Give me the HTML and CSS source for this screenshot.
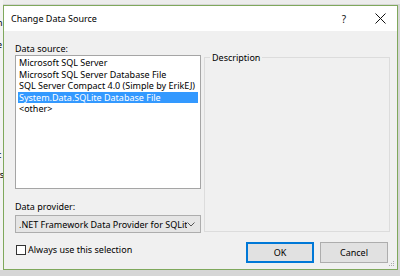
FILE: index.html
```html
<!DOCTYPE html>
<html>
<head>
<meta charset="utf-8">
<link rel="stylesheet" href="styles.css">
</head>
<body>
<div class="backdrop">
  <div class="bg-strip">
    <span class="f1">n</span><span class="f2">e</span><span class="f3">c</span><span class="f4">rs</span>
  </div>
  <div class="dialog">
    <div class="titlebar">
      <span class="title">Change Data Source</span>
      <span class="help">?</span>
      <svg class="close" width="11" height="11" viewBox="0 0 11 11"><path d="M0.5 0.5 L10.5 10.5 M10.5 0.5 L0.5 10.5" stroke="#111" stroke-width="1" fill="none"/></svg>
    </div>
    <div class="body">
      <div class="main">
        <div class="left">
          <div class="label">Data source:</div>
          <div class="listbox">
            <div class="item">Microsoft SQL Server</div>
            <div class="item">Microsoft SQL Server Database File</div>
            <div class="item">SQL Server Compact 4.0 (Simple by ErikEJ)</div>
            <div class="item selected">System.Data.SQLite Database File</div>
            <div class="item">&lt;other&gt;</div>
          </div>
          <div class="label provider">Data provider:</div>
          <div class="combo">
            <span class="combo-text">.NET Framework Data Provider for SQLit</span>
            <svg class="chev" width="8" height="5" viewBox="0 0 8 5"><path d="M0.5 0.5 L4 4 L7.5 0.5" stroke="#555" stroke-width="1" fill="none"/></svg>
          </div>
        </div>
        <fieldset class="group">
          <legend>Description</legend>
        </fieldset>
      </div>
      <div class="footer">
        <label class="check"><span class="box"></span>Always use this selection</label>
        <div class="buttons">
          <span class="btn ok">OK</span>
          <span class="btn">Cancel</span>
        </div>
      </div>
      <svg class="grip" width="7" height="7" viewBox="0 0 7 7">
        <rect x="5" y="0" width="1" height="1" fill="#aaa"/>
        <rect x="3" y="2" width="1" height="1" fill="#aaa"/><rect x="5" y="2" width="1" height="1" fill="#aaa"/>
        <rect x="1" y="4" width="1" height="1" fill="#aaa"/><rect x="3" y="4" width="1" height="1" fill="#aaa"/><rect x="5" y="4" width="1" height="1" fill="#aaa"/>
      </svg>
    </div>
  </div>
</div>
</body>
</html>
```

FILE: styles.css
```css
* { box-sizing: border-box; }
html, body { margin: 0; padding: 0; }
body {
  width: 400px;
  height: 276px;
  overflow: hidden;
  background: #dcdcdc;
  font-family: "Noto Sans", "Open Sans", sans-serif;
  font-size: 9px;
  color: #000;
}
.backdrop {
  position: relative;
  width: 400px;
  height: 276px;
  background: linear-gradient(#ececec 0, #ececec 4px, #d6d6d6 4px);
  padding: 5px 0 0 3px;
}
.bg-strip {
  position: absolute;
  left: 0;
  top: 0;
  width: 3px;
  height: 270px;
  overflow: hidden;
  background: #f3f3f3;
  display: flex;
  flex-direction: column;
  font-size: 9px;
  line-height: 10px;
}
.bg-strip span { margin-left: -3px; }
.bg-strip .f1 { margin-top: 18px; }
.bg-strip .f2 { margin-top: 12px; }
.bg-strip .f3 { margin-top: 100px; }
.bg-strip .f4 { margin-top: 10px; margin-left: -4px; }
.dialog {
  position: relative;
  width: 395px;
  height: 265px;
  border: 1px solid #7fa85c;
  background: #f0f0f0;
  display: flex;
  flex-direction: column;
}
.titlebar {
  height: 25px;
  background: #fff;
  display: flex;
  align-items: center;
  padding-left: 7px;
  font-size: 9px;
}
.title { flex: 1; }
.help { font-size: 10px; margin-right: 29px; color: #111; }
.close { margin-right: 11px; }
.body {
  position: relative;
  flex: 1;
  padding: 12px 0 0 11px;
}
.main { display: flex; gap: 3px; align-items: flex-start; }
.left { width: 186px; }
.label { height: 12px; line-height: 12px; }
.listbox {
  height: 134px;
  border: 1px solid #a5a5a5;
  background: #fff;
  padding: 1px 2px 0 2px;
}
.item {
  height: 11.6px;
  line-height: 11.6px;
  padding-left: 1px;
  white-space: nowrap;
}
.item.selected { background: #3399ff; color: #fff; }
.provider { margin-top: 12px; }
.combo {
  margin-top: 2px;
  height: 18px;
  border: 1px solid #adadad;
  background: #e5e5e5;
  display: flex;
  align-items: center;
  padding: 0 5px 0 3px;
}
.combo-text { flex: 1; white-space: nowrap; overflow: hidden; }
.group {
  margin: 9px 0 0 0;
  width: 186px;
  height: 180px;
  border: 1px solid #dcdcdc;
  padding: 0;
}
.group legend {
  margin-left: 5px;
  padding: 0 2px 0 2px;
  line-height: 11px;
}
.footer {
  display: flex;
  align-items: flex-start;
  margin-top: 9px;
  padding-right: 9px;
}
.check {
  flex: 1;
  display: flex;
  align-items: center;
  margin-top: 2px;
  line-height: 12px;
}
.box {
  width: 10px;
  height: 10px;
  border: 1px solid #333;
  background: #fff;
  margin: 0 2px 0 1px;
}
.buttons { display: flex; gap: 6px; }
.btn {
  width: 68px;
  height: 21px;
  border: 1px solid #adadad;
  background: #e1e1e1;
  display: flex;
  align-items: center;
  justify-content: center;
}
.btn.ok { border: 2px solid #0078d7; }
.grip { position: absolute; right: 2px; bottom: 1px; }
```
